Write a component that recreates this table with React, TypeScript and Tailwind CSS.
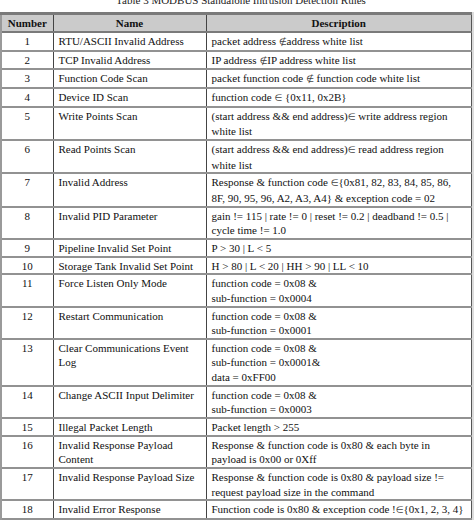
const rows: { n: number; name: string[]; desc: string[] }[] = [
  { n: 1, name: ['RTU/ASCII Invalid Address'], desc: ['packet address \u2209address white list'] },
  { n: 2, name: ['TCP Invalid Address'], desc: ['IP address \u2209IP address white list'] },
  { n: 3, name: ['Function Code Scan'], desc: ['packet function code \u2209 function code white list'] },
  { n: 4, name: ['Device ID Scan'], desc: ['function code \u2208 {0x11, 0x2B}'] },
  {
    n: 5,
    name: ['Write Points Scan'],
    desc: ['(start address && end address)\u2208 write address region', 'white list'],
  },
  {
    n: 6,
    name: ['Read Points Scan'],
    desc: ['(start address && end address)\u2208 read address region', 'white list'],
  },
  {
    n: 7,
    name: ['Invalid Address'],
    desc: ['Response & function code \u2208{0x81, 82, 83, 84, 85, 86,', '8F, 90, 95, 96, A2, A3, A4} & exception code = 02'],
  },
  {
    n: 8,
    name: ['Invalid PID Parameter'],
    desc: ['gain != 115 | rate != 0 | reset != 0.2 | deadband != 0.5 |', 'cycle time != 1.0'],
  },
  { n: 9, name: ['Pipeline Invalid Set Point'], desc: ['P > 30 | L < 5'] },
  { n: 10, name: ['Storage Tank Invalid Set Point'], desc: ['H > 80 | L < 20 | HH > 90 | LL < 10'] },
  { n: 11, name: ['Force Listen Only Mode'], desc: ['function code = 0x08 &', 'sub-function = 0x0004'] },
  { n: 12, name: ['Restart Communication'], desc: ['function code = 0x08 &', 'sub-function = 0x0001'] },
  {
    n: 13,
    name: ['Clear Communications Event', 'Log'],
    desc: ['function code = 0x08 &', 'sub-function = 0x0001&', 'data = 0xFF00'],
  },
  { n: 14, name: ['Change ASCII Input Delimiter'], desc: ['function code = 0x08 &', 'sub-function = 0x0003'] },
  { n: 15, name: ['Illegal Packet Length'], desc: ['Packet length > 255'] },
  {
    n: 16,
    name: ['Invalid Response Payload', 'Content'],
    desc: ['Response & function code is 0x80 & each byte in', 'payload is 0x00 or 0Xff'],
  },
  {
    n: 17,
    name: ['Invalid Response Payload Size'],
    desc: ['Response & function code is 0x80 & payload size !=', 'request payload size in the command'],
  },
  {
    n: 18,
    name: ['Invalid Error Response'],
    desc: ['Function code is 0x80 & exception code !\u2208{0x1, 2, 3, 4}'],
  },
];

// set symbols come from a fallback font and look too heavy, so shrink them
const withSymbols = (text: string) =>
  text.split(/([\u2208\u2209])/).map((part, i) =>
    part === '\u2208' || part === '\u2209' ? (
      <span key={i} className="font-['DejaVu_Sans',sans-serif] text-[9px] text-[#444]">
        {part}
      </span>
    ) : (
      part
    ),
  );

const Lines = ({ lines }: { lines: string[] }) => (
  <>
    {lines.map((l, i) => (
      <div key={i} className="whitespace-nowrap">
        {withSymbols(l)}
      </div>
    ))}
  </>
);

export default function App() {
  return (
    <div className="w-[474px] h-[520px] overflow-hidden bg-white text-[#111] font-['Liberation_Serif',serif] text-[11px] leading-[14.65px]">
      <div className="h-[15px] leading-[15px] -mt-[7px] mb-[4px] pl-[8px] text-center text-[#222]">
        Table 3 MODBUS Standalone Intrusion Detection Rules
      </div>
      <div className="w-[474px] border-r-2 border-[#dcdcdc]">
        <table className="w-[472px] table-fixed border-collapse">
          <colgroup>
            <col className="w-[52px]" />
            <col className="w-[153px]" />
            <col />
          </colgroup>
          <thead>
            <tr className="bg-[#cbcbcb] border-t-[3px] border-b-2 border-[#7a7a7a] font-bold leading-[15px]">
              <th className="border-l-2 border-l-[#9a9a9a] border-r border-r-[#444] pt-[1px] text-center">Number</th>
              <th className="border-r border-r-[#444] pt-[1px] text-center">Name</th>
              <th className="border-r border-r-[#555] pt-[1px] text-center">Description</th>
            </tr>
          </thead>
          <tbody>
            {rows.map((r) => (
              <tr key={r.n} className="border-b-2 border-[#929292] align-top">
                <td className="border-l-2 border-l-[#9a9a9a] border-r border-r-[#444] pt-[1px] text-center">{r.n}</td>
                <td className="border-r border-r-[#444] pt-[1px] pl-[5px]">
                  <Lines lines={r.name} />
                </td>
                <td className="border-r border-r-[#555] pt-[1px] pl-[5px]">
                  <Lines lines={r.desc} />
                </td>
              </tr>
            ))}
          </tbody>
        </table>
      </div>
    </div>
  );
}
